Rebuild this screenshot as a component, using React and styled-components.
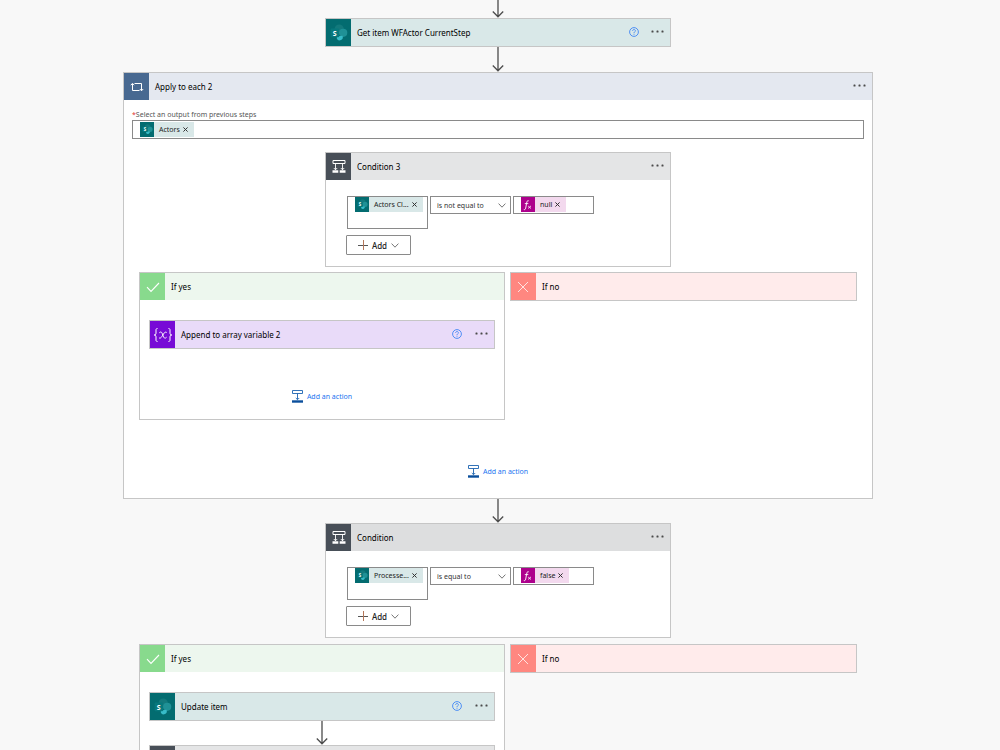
import React from 'react'
import styled, { createGlobalStyle } from 'styled-components'

const GlobalStyle = createGlobalStyle`
  * {
    box-sizing: border-box;
  }
  body {
    margin: 0;
    background-color: #f8f8f8;
    color: #1b1b1b;
    font-family: "Noto Sans", "Open Sans", sans-serif;
    font-size: 8px;
  }
  button, input, select {
    font-family: inherit;
    color: inherit;
    margin: 0;
    padding: 0;
    border: none;
    background: none;
  }
`

const Canvas = styled.main`
  height: 100vh;
  overflow: hidden;
  display: flex;
  flex-direction: column;
  align-items: center;
  padding-right: 4px;
  > * {
    flex-shrink: 0;
  }
`

const ArrowSvg = styled.svg`
  display: block;
  width: 12px;
  height: ${props => props.$height}px;
`

const Card = styled.section`
  width: 100%;
  max-width: ${props => (props.$wide ? 750 : 346)}px;
  border: 1px solid #c6c6c6;
  background-color: #ffffff;
`

const CardHeader = styled.header`
  height: 27px;
  display: flex;
  align-items: center;
  background-color: ${props => props.$color};
`

const IconTile = styled.span`
  width: 25px;
  height: 27px;
  display: flex;
  justify-content: center;
  align-items: center;
  background-color: ${props => props.$color};
  svg {
    display: block;
  }
`

const Title = styled.h2`
  flex: 1;
  margin: 0;
  padding-left: 6px;
  font-size: 8px;
  font-weight: 400;
  line-height: 12px;
  color: #000000;
`

const HeaderButton = styled.button`
  display: flex;
  justify-content: center;
  align-items: center;
  width: 24px;
  height: 20px;
  padding: 0 1px 2px 0;
  cursor: pointer;
`

const ScopeBody = styled.div`
  display: flex;
  flex-direction: column;
  align-items: center;
  padding: 10px 8px 19px;
`

const Field = styled.div`
  width: 100%;
  margin-bottom: 13px;
`

const FieldLabel = styled.label`
  display: block;
  font-size: 7px;
  line-height: 10px;
  color: #555555;
  span {
    color: #e03030;
  }
`

const TokenBox = styled.div`
  display: flex;
  flex-wrap: wrap;
  align-items: flex-start;
  align-content: flex-start;
  width: ${props => props.$width || '100%'};
  min-height: ${props => props.$height}px;
  padding: ${props => props.$top || 0}px 0 0 7px;
  border: 1px solid #8a8a8a;
  background-color: #ffffff;
`

const TokenInput = styled.input`
  flex: 1;
  min-width: 16px;
  height: 15px;
  font-size: 7px;
  outline: none;
`

const TokenChip = styled.span`
  display: flex;
  align-items: center;
  height: 15px;
  padding-right: 3px;
  background-color: ${props => props.$color};
  font-size: 7px;
  color: #222222;
`

const TokenIcon = styled.span`
  width: 14px;
  height: 15px;
  margin-right: 5px;
  display: flex;
  justify-content: center;
  align-items: center;
  background-color: ${props => props.$color};
`

const TokenRemove = styled.button`
  display: flex;
  justify-content: center;
  align-items: center;
  width: 11px;
  height: 15px;
  cursor: pointer;
`

const ConditionBody = styled.div`
  padding: 16px 20px 11px;
`

const ConditionRow = styled.div`
  display: flex;
  align-items: flex-start;
  gap: 2px;
  padding-left: 1px;
  margin-bottom: 6px;
`

const SelectWrap = styled.div`
  display: grid;
  align-items: center;
  width: 81px;
  > * {
    grid-area: 1 / 1;
  }
  svg {
    justify-self: end;
    margin-right: 5px;
    pointer-events: none;
  }
`

const OperatorSelect = styled.select`
  appearance: none;
  width: 100%;
  height: 18px;
  padding-left: 6px;
  border: 1px solid #8a8a8a;
  background-color: #ffffff;
  font-size: 7px;
  color: #333333;
`

const AddButton = styled.button`
  display: flex;
  justify-content: center;
  align-items: center;
  gap: 4px;
  width: 65px;
  height: 20px;
  border: 1px solid #8a8a8a;
  border-radius: 1px;
  background-color: #ffffff;
  font-size: 8px;
  font-weight: 500;
  color: #222222;
  cursor: pointer;
`

const Branches = styled.div`
  width: 100%;
  max-width: 718px;
  display: flex;
  align-items: flex-start;
  gap: 5px;
  margin-top: ${props => props.$space}px;
`

const Branch = styled.section`
  flex: ${props => props.$grow} 1 0;
  border: 1px solid #c6c6c6;
  background-color: #ffffff;
`

const BranchBody = styled.div`
  display: flex;
  flex-direction: column;
  align-items: center;
  padding: 20px 9px 15px;
`

const AddAction = styled.button`
  display: flex;
  align-items: center;
  gap: 4px;
  height: 16px;
  margin-top: ${props => props.$space}px;
  font-size: 7px;
  color: #1a73f0;
  cursor: pointer;
`

const Arrow = ({ height = 24 }) => (
  <ArrowSvg $height={height} viewBox={`0 0 12 ${height}`} aria-hidden="true">
    <path
      d={`M6 0V${height - 1} M0.8 ${height - 6.5}L6 ${height - 1.2}L11.2 ${height - 6.5}`}
      fill="none"
      stroke="#4c4c4c"
      strokeWidth="1.3"
    />
  </ArrowSvg>
)

const SharePointIcon = ({ size = 18 }) => (
  <svg width={size} height={size} viewBox="0 0 18 18" aria-hidden="true">
    <circle cx="9.2" cy="5" r="4.6" fill="#13797c" />
    <circle cx="13.2" cy="8.8" r="4.1" fill="#1f9196" />
    <path d="M6.8 12.6L12.4 11.8A3.1 3.1 0 1 1 6.8 14.6Z" fill="#37bcc8" />
    <rect x="0.6" y="4.6" width="8.4" height="8.6" rx="0.8" fill="#07787c" />
    <text x="4.8" y="11.5" textAnchor="middle" fontFamily="Open Sans, sans-serif" fontSize="7" fontWeight="700" fill="#ffffff">S</text>
  </svg>
)

const LoopIcon = () => (
  <svg width="14" height="12" viewBox="0 0 14 12" fill="none" stroke="#ffffff" strokeWidth="1" aria-hidden="true">
    <path d="M2.5 3V9.5H9.5M4.5 2.5H11.5V9.5" />
    <path d="M0.8 4.2L2.5 2.3L4.2 4.2M9.8 8L11.5 9.8L13.2 8" />
  </svg>
)

const ConditionIcon = () => (
  <svg width="14" height="15" viewBox="0 0 14 15" fill="none" stroke="#ffffff" aria-hidden="true">
    <path d="M1 1.5H13V4.5H1Z" />
    <path d="M3.5 4.5V11M10.5 4.5V11M1.8 9L3.5 10.8L5.2 9M8.8 9L10.5 10.8L12.2 9" strokeWidth="0.9" />
    <path d="M0.5 12.5H6.3M7.7 12.5H13.5" strokeWidth="2.6" />
  </svg>
)

const VariableIcon = () => (
  <svg width="22" height="18" viewBox="0 0 22 18" aria-hidden="true">
    <g fill="none" stroke="#ffffff" strokeWidth="1">
      <path d="M5.5 2.5C3.8 2.5 4 3.5 4 5V7C4 8.4 3.4 9 2.2 9C3.4 9 4 9.6 4 11V13C4 14.5 3.8 15.5 5.5 15.5" />
      <path d="M16.5 2.5C18.2 2.5 18 3.5 18 5V7C18 8.4 18.6 9 19.8 9C18.6 9 18 9.6 18 11V13C18 14.5 18.2 15.5 16.5 15.5" />
      <path d="M7.3 6.8C9.2 5 9.9 6.4 10.8 9C11.8 11.9 12.7 13.2 14.6 11.2M14.7 6.4C12.8 5.4 11.9 7.4 10.8 9C9.7 10.7 8.8 12.9 7 11.8" />
    </g>
  </svg>
)

const FxIcon = () => (
  <svg width="12" height="12" viewBox="0 0 12 12" fill="none" stroke="#ffffff" strokeWidth="0.9" aria-hidden="true">
    <path d="M6.7 1.8C5.2 1.2 4.9 2.6 4.6 4.2L3.7 9C3.4 10.5 2.8 11 1.8 10.4M2.8 4.6H6.3" />
    <path d="M6.3 7.2C7.4 6.8 7.4 9.6 9 9.2M9 7C7.8 7 7.4 9.4 6.1 9.3" strokeWidth="0.8" />
  </svg>
)

const CheckIcon = () => (
  <svg width="14" height="12" viewBox="0 0 14 12" fill="none" stroke="#ffffff" strokeWidth="1.1" aria-hidden="true">
    <path d="M1 6.2L5 10.4L13 2" />
  </svg>
)

const CrossIcon = () => (
  <svg width="12" height="12" viewBox="0 0 12 12" fill="none" stroke="#ffe3e0" strokeWidth="1" aria-hidden="true">
    <path d="M1 1L11 11M11 1L1 11" />
  </svg>
)

const HelpIcon = () => (
  <svg width="10" height="10" viewBox="0 0 10 10" fill="none" stroke="#3f86f5" aria-hidden="true">
    <circle cx="5" cy="5" r="4.4" strokeWidth="0.9" />
    <path d="M3.6 3.9C3.6 2.1 6.4 2.1 6.4 3.8C6.4 4.9 5 4.8 5 6.1M5 6.8V7.7" strokeWidth="0.9" />
  </svg>
)

const DotsIcon = () => (
  <svg width="13" height="3" viewBox="0 0 13 3" fill="#4a4a4a" aria-hidden="true">
    <rect x="0.5" y="0.5" width="2" height="2" rx="0.6" />
    <rect x="5.5" y="0.5" width="2" height="2" rx="0.6" />
    <rect x="10.5" y="0.5" width="2" height="2" rx="0.6" />
  </svg>
)

const RemoveIcon = () => (
  <svg width="5" height="5" viewBox="0 0 5 5" stroke="#333333" strokeWidth="1" aria-hidden="true">
    <path d="M0.4 0.4L4.6 4.6M4.6 0.4L0.4 4.6" />
  </svg>
)

const ChevronIcon = () => (
  <svg width="8" height="5" viewBox="0 0 8 5" fill="none" stroke="#666666" strokeWidth="0.9" aria-hidden="true">
    <path d="M0.6 0.6L4 4.2L7.4 0.6" />
  </svg>
)

const PlusIcon = () => (
  <svg width="10" height="10" viewBox="0 0 10 10" fill="none" strokeWidth="1" aria-hidden="true">
    <path d="M0 5.5H10" stroke="#555555" />
    <path d="M5.5 0V10" stroke="#b5775a" />
  </svg>
)

const AddActionIcon = () => (
  <svg width="11" height="13" viewBox="0 0 11 13" fill="none" stroke="#1c63b0" aria-hidden="true">
    <path d="M0.5 0.5H10.5V3.5H0.5Z" strokeWidth="0.9" />
    <path d="M5.5 3.5V9.5M3.8 8L5.5 9.7L7.2 8" strokeWidth="0.9" />
    <path d="M0 11.5H11" stroke="#0b4f9c" strokeWidth="2.4" />
  </svg>
)

const kinds = {
  sharepoint: { tile: '#036c70', header: '#d9e8e8', icon: <SharePointIcon /> },
  loop: { tile: '#486991', header: '#e4e8f0', icon: <LoopIcon /> },
  condition: { tile: '#484f58', header: '#e4e5e6', icon: <ConditionIcon /> },
  selected: { tile: '#484f58', header: '#dddedf', icon: <ConditionIcon /> },
  variable: { tile: '#770bd6', header: '#e9dbf9', icon: <VariableIcon /> },
}

const StepCard = ({ kind, title, help, wide, children }) => (
  <Card $wide={wide}>
    <CardHeader $color={kinds[kind].header}>
      <IconTile $color={kinds[kind].tile}>{kinds[kind].icon}</IconTile>
      <Title>{title}</Title>
      {help && <HeaderButton type="button" aria-label="Help"><HelpIcon /></HeaderButton>}
      <HeaderButton type="button" aria-label="More commands"><DotsIcon /></HeaderButton>
    </CardHeader>
    {children}
  </Card>
)

const Token = ({ fx, children }) => (
  <TokenChip $color={fx ? '#f3d9ee' : '#d9e8e8'}>
    <TokenIcon $color={fx ? '#ad008c' : '#036c70'}>
      {fx ? <FxIcon /> : <SharePointIcon size={11} />}
    </TokenIcon>
    {children}
    <TokenRemove type="button" aria-label="Remove"><RemoveIcon /></TokenRemove>
  </TokenChip>
)

const Condition = ({ kind, title, left, operator, right }) => (
  <StepCard kind={kind} title={title}>
    <ConditionBody>
      <ConditionRow>
        <TokenBox $width="81px" $height={33}>
          <Token>{left}</Token>
          <TokenInput aria-label="Left value" />
        </TokenBox>
        <SelectWrap>
          <OperatorSelect aria-label="Operator" defaultValue={operator}>
            <option>is equal to</option>
            <option>is not equal to</option>
          </OperatorSelect>
          <ChevronIcon />
        </SelectWrap>
        <TokenBox $width="81px" $height={18}>
          <Token fx>{right}</Token>
          <TokenInput aria-label="Right value" />
        </TokenBox>
      </ConditionRow>
      <AddButton type="button"><PlusIcon />Add<ChevronIcon /></AddButton>
    </ConditionBody>
  </StepCard>
)

const YesBranch = ({ children }) => (
  <Branch $grow={366}>
    <CardHeader $color="#edf7ee">
      <IconTile $color="#88da8d"><CheckIcon /></IconTile>
      <Title>If yes</Title>
    </CardHeader>
    <BranchBody>{children}</BranchBody>
  </Branch>
)

const NoBranch = () => (
  <Branch $grow={347}>
    <CardHeader $color="#ffebeb">
      <IconTile $color="#ff8780"><CrossIcon /></IconTile>
      <Title>If no</Title>
    </CardHeader>
  </Branch>
)

const App = () => {
  return (
    <>
      <GlobalStyle />
      <Canvas>
        <Arrow height={18} />
        <StepCard kind="sharepoint" title="Get item WFActor CurrentStep" help />
        <Arrow height={25} />
        <StepCard kind="loop" title="Apply to each 2" wide>
          <ScopeBody>
            <Field>
              <FieldLabel htmlFor="output"><span>*</span>Select an output from previous steps</FieldLabel>
              <TokenBox $height={19} $top={1}>
                <Token>Actors</Token>
                <TokenInput id="output" />
              </TokenBox>
            </Field>
            <Condition kind="condition" title="Condition 3" left="Actors Cl..." operator="is not equal to" right="null" />
            <Branches $space={5}>
              <YesBranch>
                <StepCard kind="variable" title="Append to array variable 2" help />
                <AddAction type="button" $space={39}><AddActionIcon />Add an action</AddAction>
              </YesBranch>
              <NoBranch />
            </Branches>
            <AddAction type="button" $space={43}><AddActionIcon />Add an action</AddAction>
          </ScopeBody>
        </StepCard>
        <Arrow />
        <Condition kind="selected" title="Condition" left="Processe..." operator="is equal to" right="false" />
        <Branches $space={6}>
          <YesBranch>
            <StepCard kind="sharepoint" title="Update item" help />
            <Arrow />
            <StepCard kind="condition" />
          </YesBranch>
          <NoBranch />
        </Branches>
      </Canvas>
    </>
  )
}

export default App
